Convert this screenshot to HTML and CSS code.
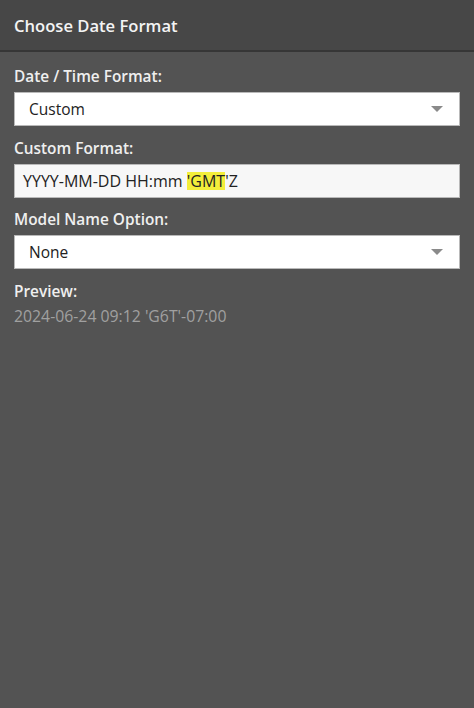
FILE: index.html
```html
<!DOCTYPE html>
<html>
<head>
<meta charset="utf-8">
<link rel="stylesheet" href="styles.css">
</head>
<body>
<div class="app">
  <header class="header">Choose Date Format</header>
  <main class="content">
    <div class="field">
      <label class="label">Date / Time Format:</label>
      <div class="select"><span>Custom</span><span class="arrow"></span></div>
    </div>
    <div class="field">
      <label class="label">Custom Format:</label>
      <div class="input">YYYY-MM-DD HH:mm <span class="hl">'GMT</span>'Z</div>
    </div>
    <div class="field">
      <label class="label">Model Name Option:</label>
      <div class="select"><span>None</span><span class="arrow"></span></div>
    </div>
    <div class="field preview">
      <div class="label">Preview:</div>
      <div class="preview-value">2024-06-24 09:12 'G6T'-07:00</div>
    </div>
  </main>
</div>
</body>
</html>
```

FILE: styles.css
```css
html, body {
  margin: 0;
  padding: 0;
  height: 100%;
}
body {
  background: #535353;
  font-family: "Open Sans", "Noto Sans", sans-serif;
}
.app {
  display: flex;
  flex-direction: column;
  min-height: 100%;
}
.header {
  box-sizing: border-box;
  background: #474747;
  border-bottom: 2px solid #363636;
  color: #f4f4f4;
  font-size: 16.6px;
  font-weight: 600;
  display: flex;
  align-items: center;
  padding: 0 14px;
  height: 52px;
}
.content {
  display: flex;
  flex-direction: column;
  gap: 12.6px;
  padding: 15px 14px 0 14px;
}
.field {
  display: flex;
  flex-direction: column;
  gap: 5px;
}
.label {
  color: #efefef;
  font-size: 15.4px;
  font-weight: 600;
  line-height: 20px;
  height: 20px;
}
.select, .input {
  height: 34px;
  box-sizing: border-box;
  border: 1px solid #b9b9b9;
  display: flex;
  align-items: center;
  color: #222;
  width: 446px;
}
.select {
  background: #ffffff;
  padding: 0 14px;
  font-size: 15.5px;
  justify-content: space-between;
}
.input {
  background: #f7f7f7;
  padding: 0 8px;
  font-size: 16px;
  white-space: pre;
}
.hl {
  background: #f3ee3b;
  display: inline-block;
  line-height: 18px;
}
.arrow {
  width: 0;
  height: 0;
  border-left: 6px solid transparent;
  border-right: 6px solid transparent;
  border-top: 6px solid #8a8a8a;
  margin-right: 2px;
}
.preview {
  gap: 4px;
}
.preview-value {
  color: #a0a0a0;
  font-size: 15.8px;
  line-height: 20px;
}
```
